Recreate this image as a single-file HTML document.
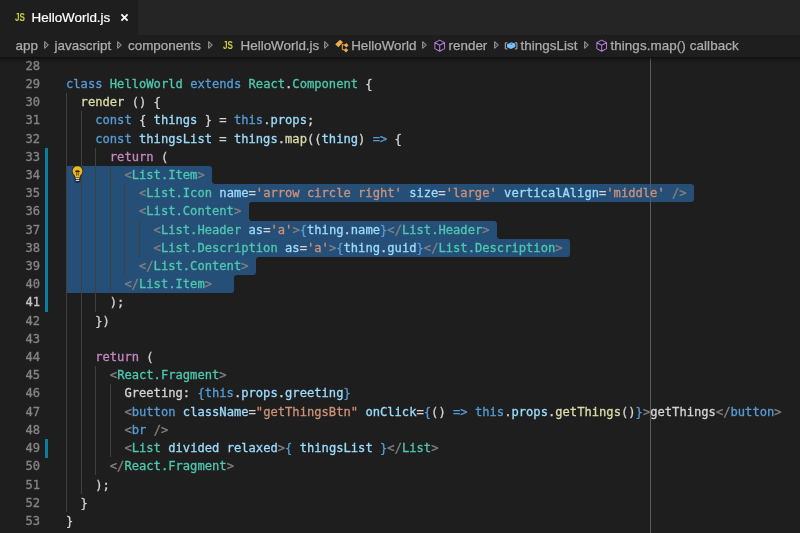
<!DOCTYPE html>
<html><head><meta charset="utf-8"><title>HelloWorld.js</title>
<style>
html,body{margin:0;padding:0;}
body{width:800px;height:533px;overflow:hidden;background:#1e1e1e;position:relative;font-family:"Liberation Sans",sans-serif;}
.tabs{position:absolute;left:0;top:0;width:800px;height:35.4px;background:#252526;}
.tab{position:absolute;left:0;top:0;width:138px;height:35.4px;background:#1e1e1e;color:#fff;font-size:13.5px;line-height:35px;}
.js{color:#cbcb41;font-size:10.7px;font-weight:bold;display:inline-block;transform:scaleX(0.76);transform-origin:0 50%;}
.tab .js{position:absolute;left:14.8px;top:0.3px;}
.tab .name{position:absolute;left:31.6px;top:0;font-size:13.4px;-webkit-text-stroke-width:0.2px;}
.tab .x{position:absolute;left:120.3px;top:13.3px;width:9px;height:9px;}
.bc{position:absolute;left:0;top:35.4px;width:800px;height:22.2px;background:#1e1e1e;color:#adadad;font-size:13.4px;line-height:22.8px;white-space:nowrap;-webkit-text-stroke-width:0.25px;}
.bc span,.bc svg{position:absolute;}
.bc .js{top:-1.3px;-webkit-text-stroke-width:0;}
.shadow{position:absolute;left:0;top:57px;width:800px;height:6px;box-shadow:#000 0 6px 6px -6px inset;}
.tabs,.bc,.ed{will-change:transform;}
.ed{position:absolute;left:0;top:0;width:800px;height:533px;font-family:"DejaVu Sans Mono","Liberation Mono",monospace;font-size:12.13px;}
.ln{position:absolute;left:0;width:40px;text-align:right;color:#858585;height:18.2px;line-height:18.2px;-webkit-text-stroke:0.3px;}
.ln.a{color:#c6c6c6;}
.l{position:absolute;left:66px;height:18.2px;line-height:18.2px;white-space:pre;color:#d4d4d4;letter-spacing:0px;-webkit-text-stroke:0.3px;}
.sel{position:absolute;left:66px;background:#264f78;height:18.2px;}
.g{position:absolute;width:1px;background:#404040;}
.git{position:absolute;left:45px;width:3px;background:#0c7d9d;}
.ruler{position:absolute;left:650.3px;top:57.6px;width:1px;height:476px;background:#5a5a5a;}
</style></head><body>

<div class="ed">
<div class="sel" style="top:165.91px;width:146.1px;height:18.26px;border-radius:0 3px 0 0"></div>
<div style="position:absolute;left:212.1px;top:181.12px;width:3px;height:3px;background:radial-gradient(circle at 100% 0%,transparent 2.7px,#264f78 3.2px)"></div>
<div class="sel" style="top:184.12px;width:628.3px;height:18.26px;border-radius:0 3px 3px 0"></div>
<div style="position:absolute;left:248.7px;top:202.33px;width:3px;height:3px;background:radial-gradient(circle at 100% 100%,transparent 2.7px,#264f78 3.2px)"></div>
<div class="sel" style="top:202.33px;width:182.7px;height:18.26px;border-radius:0 0 0 0"></div>
<div style="position:absolute;left:248.7px;top:217.54px;width:3px;height:3px;background:radial-gradient(circle at 100% 0%,transparent 2.7px,#264f78 3.2px)"></div>
<div class="sel" style="top:220.54px;width:431.1px;height:18.26px;border-radius:0 3px 0 0"></div>
<div style="position:absolute;left:497.1px;top:235.75px;width:3px;height:3px;background:radial-gradient(circle at 100% 0%,transparent 2.7px,#264f78 3.2px)"></div>
<div class="sel" style="top:238.75px;width:504.1px;height:18.26px;border-radius:0 3px 3px 0"></div>
<div style="position:absolute;left:256.0px;top:256.96px;width:3px;height:3px;background:radial-gradient(circle at 100% 100%,transparent 2.7px,#264f78 3.2px)"></div>
<div class="sel" style="top:256.96px;width:190.0px;height:18.26px;border-radius:0 0 3px 0"></div>
<div style="position:absolute;left:234.0px;top:275.17px;width:3px;height:3px;background:radial-gradient(circle at 100% 100%,transparent 2.7px,#264f78 3.2px)"></div>
<div class="sel" style="top:275.17px;width:168.0px;height:18.26px;border-radius:0 0 3px 0"></div>
<div class="ruler"></div>
<div class="g" style="left:66.0px;top:93.1px;height:418.8px"></div>
<div class="g" style="left:80.6px;top:111.3px;height:382.4px"></div>
<div class="g" style="left:95.2px;top:147.7px;height:163.9px"></div>
<div class="g" style="left:95.2px;top:366.2px;height:109.3px"></div>
<div class="g" style="left:109.8px;top:165.9px;height:127.5px"></div>
<div class="g" style="left:109.8px;top:384.4px;height:72.8px"></div>
<div class="g" style="left:124.4px;top:184.1px;height:91.1px"></div>
<div class="g" style="left:139.1px;top:220.5px;height:36.4px"></div>
<div class="git" style="top:147.7px;height:164.3px"></div>
<div class="git" style="top:439.1px;height:18.6px"></div>
<div class="ln" style="top:56.6px">28</div>
<div class="ln" style="top:74.9px">29</div>
<div class="l" style="top:74.9px"><span style="color:#569cd6">class</span> <span style="color:#4ec9b0">HelloWorld</span> <span style="color:#569cd6">extends</span> <span style="color:#4ec9b0">React</span>.<span style="color:#4ec9b0">Component</span> {</div>
<div class="ln" style="top:93.1px">30</div>
<div class="l" style="top:93.1px">  <span style="color:#dcdcaa">render</span> () {</div>
<div class="ln" style="top:111.3px">31</div>
<div class="l" style="top:111.3px">    <span style="color:#569cd6">const</span> { <span style="color:#9cdcfe">things</span> } = <span style="color:#569cd6">this</span>.<span style="color:#9cdcfe">props</span>;</div>
<div class="ln" style="top:129.5px">32</div>
<div class="l" style="top:129.5px">    <span style="color:#569cd6">const</span> <span style="color:#9cdcfe">thingsList</span> = <span style="color:#9cdcfe">things</span>.<span style="color:#dcdcaa">map</span>((<span style="color:#9cdcfe">thing</span>) <span style="color:#569cd6">=&gt;</span> {</div>
<div class="ln" style="top:147.7px">33</div>
<div class="l" style="top:147.7px">      <span style="color:#c586c0">return</span> (</div>
<div class="ln" style="top:165.9px">34</div>
<div class="l" style="top:165.9px">        <span style="color:#808080">&lt;</span><span style="color:#4ec9b0">List.Item</span><span style="color:#808080">&gt;</span></div>
<div class="ln" style="top:184.1px">35</div>
<div class="l" style="top:184.1px">          <span style="color:#808080">&lt;</span><span style="color:#4ec9b0">List.Icon</span> <span style="color:#9cdcfe">name</span>=<span style="color:#ce9178">'arrow circle right'</span> <span style="color:#9cdcfe">size</span>=<span style="color:#ce9178">'large'</span> <span style="color:#9cdcfe">verticalAlign</span>=<span style="color:#ce9178">'middle'</span> <span style="color:#808080">/&gt;</span></div>
<div class="ln" style="top:202.3px">36</div>
<div class="l" style="top:202.3px">          <span style="color:#808080">&lt;</span><span style="color:#4ec9b0">List.Content</span><span style="color:#808080">&gt;</span></div>
<div class="ln" style="top:220.5px">37</div>
<div class="l" style="top:220.5px">            <span style="color:#808080">&lt;</span><span style="color:#4ec9b0">List.Header</span> <span style="color:#9cdcfe">as</span>=<span style="color:#ce9178">'a'</span><span style="color:#808080">&gt;</span><span style="color:#569cd6">{</span><span style="color:#9cdcfe">thing</span>.<span style="color:#9cdcfe">name</span><span style="color:#569cd6">}</span><span style="color:#808080">&lt;/</span><span style="color:#4ec9b0">List.Header</span><span style="color:#808080">&gt;</span></div>
<div class="ln" style="top:238.8px">38</div>
<div class="l" style="top:238.8px">            <span style="color:#808080">&lt;</span><span style="color:#4ec9b0">List.Description</span> <span style="color:#9cdcfe">as</span>=<span style="color:#ce9178">'a'</span><span style="color:#808080">&gt;</span><span style="color:#569cd6">{</span><span style="color:#9cdcfe">thing</span>.<span style="color:#9cdcfe">guid</span><span style="color:#569cd6">}</span><span style="color:#808080">&lt;/</span><span style="color:#4ec9b0">List.Description</span><span style="color:#808080">&gt;</span></div>
<div class="ln" style="top:257.0px">39</div>
<div class="l" style="top:257.0px">          <span style="color:#808080">&lt;/</span><span style="color:#4ec9b0">List.Content</span><span style="color:#808080">&gt;</span></div>
<div class="ln" style="top:275.2px">40</div>
<div class="l" style="top:275.2px">        <span style="color:#808080">&lt;/</span><span style="color:#4ec9b0">List.Item</span><span style="color:#808080">&gt;</span></div>
<div class="ln a" style="top:293.4px">41</div>
<div class="l" style="top:293.4px">      );</div>
<div class="ln" style="top:311.6px">42</div>
<div class="l" style="top:311.6px">    })</div>
<div class="ln" style="top:329.8px">43</div>
<div class="ln" style="top:348.0px">44</div>
<div class="l" style="top:348.0px">    <span style="color:#c586c0">return</span> (</div>
<div class="ln" style="top:366.2px">45</div>
<div class="l" style="top:366.2px">      <span style="color:#808080">&lt;</span><span style="color:#4ec9b0">React.Fragment</span><span style="color:#808080">&gt;</span></div>
<div class="ln" style="top:384.4px">46</div>
<div class="l" style="top:384.4px">        Greeting: <span style="color:#569cd6">{this</span>.<span style="color:#9cdcfe">props</span>.<span style="color:#9cdcfe">greeting</span><span style="color:#569cd6">}</span></div>
<div class="ln" style="top:402.6px">47</div>
<div class="l" style="top:402.6px">        <span style="color:#808080">&lt;</span><span style="color:#569cd6">button</span> <span style="color:#9cdcfe">className</span>=<span style="color:#ce9178">"getThingsBtn"</span> <span style="color:#9cdcfe">onClick</span>=<span style="color:#569cd6">{</span>() <span style="color:#569cd6">=&gt;</span> <span style="color:#569cd6">this</span>.<span style="color:#9cdcfe">props</span>.<span style="color:#dcdcaa">getThings</span>()<span style="color:#569cd6">}</span><span style="color:#808080">&gt;</span>getThings<span style="color:#808080">&lt;/</span><span style="color:#569cd6">button</span><span style="color:#808080">&gt;</span></div>
<div class="ln" style="top:420.9px">48</div>
<div class="l" style="top:420.9px">        <span style="color:#808080">&lt;</span><span style="color:#569cd6">br</span> <span style="color:#808080">/&gt;</span></div>
<div class="ln" style="top:439.1px">49</div>
<div class="l" style="top:439.1px">        <span style="color:#808080">&lt;</span><span style="color:#4ec9b0">List</span> <span style="color:#9cdcfe">divided</span> <span style="color:#9cdcfe">relaxed</span><span style="color:#808080">&gt;</span><span style="color:#569cd6">{</span> <span style="color:#9cdcfe">thingsList</span> <span style="color:#569cd6">}</span><span style="color:#808080">&lt;/</span><span style="color:#4ec9b0">List</span><span style="color:#808080">&gt;</span></div>
<div class="ln" style="top:457.3px">50</div>
<div class="l" style="top:457.3px">      <span style="color:#808080">&lt;/</span><span style="color:#4ec9b0">React.Fragment</span><span style="color:#808080">&gt;</span></div>
<div class="ln" style="top:475.5px">51</div>
<div class="l" style="top:475.5px">    );</div>
<div class="ln" style="top:493.7px">52</div>
<div class="l" style="top:493.7px">  }</div>
<div class="ln" style="top:511.9px">53</div>
<div class="l" style="top:511.9px">}</div>
<svg style="position:absolute;left:71px;top:165px" width="13" height="18" viewBox="71 165 13 18">
<path d="M77.5 166.3C74.6 166.3 72.6 168.4 72.6 171.1C72.6 172.9 73.4 174 74.3 175.1C74.9 175.8 75.3 176.5 75.3 177.5V180.6C75.3 181.3 75.9 181.8 76.6 181.8H78.4C79.1 181.8 79.7 181.3 79.7 180.6V177.5C79.7 176.5 80.1 175.8 80.7 175.1C81.6 174 82.4 172.9 82.4 171.1C82.4 168.4 80.4 166.3 77.5 166.3z" fill="#1c1c1c" stroke="#1c1c1c" stroke-width="1.7" opacity="0.85"/>
<path d="M77.5 166.3C74.6 166.3 72.6 168.4 72.6 171.1C72.6 172.9 73.4 174 74.3 175.1C74.9 175.8 75.3 176.5 75.3 177.4H79.7C79.7 176.5 80.1 175.8 80.7 175.1C81.6 174 82.4 172.9 82.4 171.1C82.4 168.4 80.4 166.3 77.5 166.3z" fill="#eab71e"/>
<path d="M75.1 171.9C75.1 169.7 79.9 169.7 79.9 171.9z" fill="#33290a"/>
<path d="M76.7 171.3V175.6M78.3 171.3V175.6" fill="none" stroke="#33290a" stroke-width="0.7"/>
<rect x="75.7" y="178" width="3.6" height="1.15" fill="#d2d2d2"/><rect x="75.7" y="179.9" width="3.6" height="1.15" fill="#d2d2d2"/>
</svg>
</div>
<div class="tabs"><div class="tab"><span class="js">JS</span><span class="name">HelloWorld.js</span>
<svg class="x" viewBox="0 0 9 9"><path d="M1.4 1.4L7.6 7.6M7.6 1.4L1.4 7.6" stroke="#fff" stroke-width="1.8" fill="none"/></svg></div></div>
<div class="bc">
<span style="left:15.6px">app</span><svg style="left:44px;top:6.2px" width="6" height="8" viewBox="0 0 6 8"><path d="M0.7 0.6L4.4 4L0.7 7.4z" fill="rgba(160,160,160,0.25)" stroke="#a0a0a0" stroke-width="1" stroke-linejoin="round"/></svg>
<span style="left:54.6px">javascript</span><svg style="left:117px;top:6.2px" width="6" height="8" viewBox="0 0 6 8"><path d="M0.7 0.6L4.4 4L0.7 7.4z" fill="rgba(160,160,160,0.25)" stroke="#a0a0a0" stroke-width="1" stroke-linejoin="round"/></svg>
<span style="left:128px">components</span><svg style="left:208px;top:6.2px" width="6" height="8" viewBox="0 0 6 8"><path d="M0.7 0.6L4.4 4L0.7 7.4z" fill="rgba(160,160,160,0.25)" stroke="#a0a0a0" stroke-width="1" stroke-linejoin="round"/></svg>
<span class="js" style="left:223px">JS</span><span style="left:240.6px">HelloWorld.js</span><svg style="left:324.3px;top:6.2px" width="6" height="8" viewBox="0 0 6 8"><path d="M0.7 0.6L4.4 4L0.7 7.4z" fill="rgba(160,160,160,0.25)" stroke="#a0a0a0" stroke-width="1" stroke-linejoin="round"/></svg>
<svg style="left:334px;top:2.6px" width="16" height="16" viewBox="334 38 16 16"><path d="M340 39.8L343 42.3L338.4 47.2L335.2 44.3z" fill="#f0ab4c"/><path d="M342.3 44.2V49.7H344.6M342.3 44.9H345" fill="none" stroke="#f0ab4c" stroke-width="1"/><path d="M346.3 43l2.2 2.25-2.2 2.25-2.2-2.25zM346 48l2.2 2.25-2.2 2.25-2.2-2.25z" fill="#f0ab4c"/></svg>
<span style="left:351.2px">HelloWorld</span><svg style="left:422.2px;top:6.2px" width="6" height="8" viewBox="0 0 6 8"><path d="M0.7 0.6L4.4 4L0.7 7.4z" fill="rgba(160,160,160,0.25)" stroke="#a0a0a0" stroke-width="1" stroke-linejoin="round"/></svg>
<svg style="left:432.7px;top:4.3px" width="13.4" height="13.4" viewBox="0 0 16 16"><path d="M8 1.3L2.2 4.3v7.2L8 14.7l5.8-3.2V4.3zM2.4 4.4L8 7.4l5.6-3M8 7.4v7.2" fill="rgba(0,0,0,0.12)" stroke="#b180d7" stroke-width="1.2" stroke-linejoin="round"/></svg><span style="left:448.6px">render</span><svg style="left:493.6px;top:6.2px" width="6" height="8" viewBox="0 0 6 8"><path d="M0.7 0.6L4.4 4L0.7 7.4z" fill="rgba(160,160,160,0.25)" stroke="#a0a0a0" stroke-width="1" stroke-linejoin="round"/></svg>
<svg style="left:503px;top:4.6px" width="16" height="12" viewBox="503 40 16 12"><path d="M507.4 42.8H505.3V48.9H507.4M514.8 42.8H516.9V48.9H514.8" fill="none" stroke="#b4b4b4" stroke-width="1"/><path d="M507 44.2l4.5-2 3.8 1.6v3.2l-4.5 1.9-3.8-1.7z" fill="#75beff"/><path d="M510 44.1l1.5-0.7 1.2 0.5-1.5 0.7z" fill="#1e1e1e" opacity="0.8"/></svg>
<span style="left:520.4px;letter-spacing:0.05px">thingsList</span><svg style="left:584px;top:6.2px" width="6" height="8" viewBox="0 0 6 8"><path d="M0.7 0.6L4.4 4L0.7 7.4z" fill="rgba(160,160,160,0.25)" stroke="#a0a0a0" stroke-width="1" stroke-linejoin="round"/></svg>
<svg style="left:595.3px;top:4.3px" width="13.4" height="13.4" viewBox="0 0 16 16"><path d="M8 1.3L2.2 4.3v7.2L8 14.7l5.8-3.2V4.3zM2.4 4.4L8 7.4l5.6-3M8 7.4v7.2" fill="rgba(0,0,0,0.12)" stroke="#b180d7" stroke-width="1.2" stroke-linejoin="round"/></svg><span style="left:610.4px;letter-spacing:0.09px">things.map() callback</span>
</div>
<div class="shadow"></div>
</body></html>
